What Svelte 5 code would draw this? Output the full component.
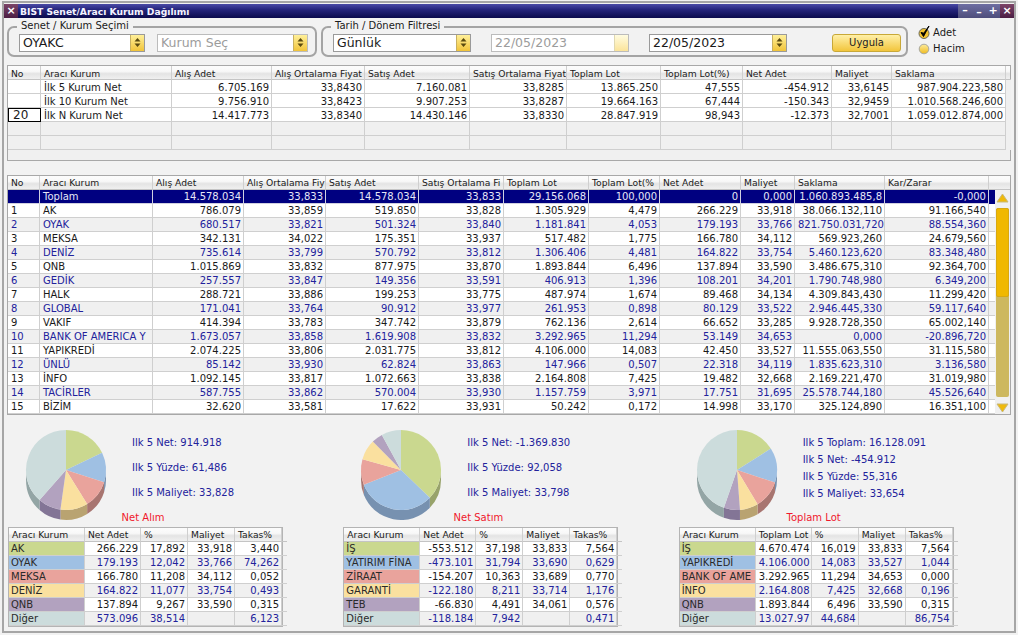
<script>
	// column widths, last one takes what is left
	const topCols = [33, 131, 100, 93, 105, 97, 94, 82, 89, 60, 114]
	const topHead = ['No', 'Aracı Kurum', 'Alış Adet', 'Alış Ortalama Fiyat', 'Satış Adet', 'Satış Ortalama Fiyat', 'Toplam Lot', 'Toplam Lot(%)', 'Net Adet', 'Maliyet', 'Saklama']
	const topRows = [
		['', 'İlk 5 Kurum Net', '6.705.169', '33,8430', '7.160.081', '33,8285', '13.865.250', '47,555', '-454.912', '33,6145', '987.904.223,580'],
		['', 'İlk 10 Kurum Net', '9.756.910', '33,8423', '9.907.253', '33,8287', '19.664.163', '67,444', '-150.343', '32,9459', '1.010.568.246,600'],
		['20', 'İlk N Kurum Net', '14.417.773', '33,8340', '14.430.146', '33,8330', '28.847.919', '98,943', '-12.373', '32,7001', '1.059.012.874,000']
	]

	const mainCols = [32, 113, 91, 82, 93, 85, 85, 71, 81, 54, 90, 104]
	const mainHead = ['No', 'Aracı Kurum', 'Alış Adet', 'Alış Ortalama Fiy', 'Satış Adet', 'Satış Ortalama Fi', 'Toplam Lot', 'Toplam Lot(%', 'Net Adet', 'Maliyet', 'Saklama', 'Kar/Zarar']
	const total = ['', 'Toplam', '14.578.034', '33,833', '14.578.034', '33,833', '29.156.068', '100,000', '0', '0,000', '1.060.893.485,8', '-0,000']
	const mainRows = [
		['1', 'AK', '786.079', '33,859', '519.850', '33,828', '1.305.929', '4,479', '266.229', '33,918', '38.066.132,110', '91.166,540'],
		['2', 'OYAK', '680.517', '33,821', '501.324', '33,840', '1.181.841', '4,053', '179.193', '33,766', '821.750.031,720', '88.554,360'],
		['3', 'MEKSA', '342.131', '34,022', '175.351', '33,937', '517.482', '1,775', '166.780', '34,112', '569.923,260', '24.679,560'],
		['4', 'DENİZ', '735.614', '33,799', '570.792', '33,812', '1.306.406', '4,481', '164.822', '33,754', '5.460.123,620', '83.348,480'],
		['5', 'QNB', '1.015.869', '33,832', '877.975', '33,870', '1.893.844', '6,496', '137.894', '33,590', '3.486.675,310', '92.364,700'],
		['6', 'GEDİK', '257.557', '33,847', '149.356', '33,591', '406.913', '1,396', '108.201', '34,201', '1.790.748,980', '6.349,200'],
		['7', 'HALK', '288.721', '33,886', '199.253', '33,775', '487.974', '1,674', '89.468', '34,134', '4.309.843,430', '11.299,420'],
		['8', 'GLOBAL', '171.041', '33,764', '90.912', '33,977', '261.953', '0,898', '80.129', '33,522', '2.946.445,330', '59.117,640'],
		['9', 'VAKIF', '414.394', '33,783', '347.742', '33,879', '762.136', '2,614', '66.652', '33,285', '9.928.728,350', '65.002,140'],
		['10', 'BANK OF AMERICA Y', '1.673.057', '33,858', '1.619.908', '33,832', '3.292.965', '11,294', '53.149', '34,653', '0,000', '-20.896,720'],
		['11', 'YAPIKREDİ', '2.074.225', '33,806', '2.031.775', '33,812', '4.106.000', '14,083', '42.450', '33,527', '11.555.063,550', '31.115,580'],
		['12', 'ÜNLÜ', '85.142', '33,930', '62.824', '33,863', '147.966', '0,507', '22.318', '34,119', '1.835.623,310', '3.136,580'],
		['13', 'İNFO', '1.092.145', '33,817', '1.072.663', '33,838', '2.164.808', '7,425', '19.482', '32,668', '2.169.221,470', '31.019,980'],
		['14', 'TACİRLER', '587.755', '33,862', '570.004', '33,930', '1.157.759', '3,971', '17.751', '31,695', '25.578.744,180', '45.526,640'],
		['15', 'BİZİM', '32.620', '33,581', '17.622', '33,931', '50.242', '0,172', '14.998', '33,170', '325.124,890', '16.351,100']
	]

	const colors = ['#cad88f', '#9fc0e3', '#e9a39c', '#fae09f', '#b2a2bf', '#ccdcdc']
	const sideColors = ['#98a36b', '#7791b0', '#a87570', '#b9a371', '#837596', '#93a5a5']
	const smallCols = [76, 56, 47, 47, 47]

	const panels = [
		{
			title: 'Net Alım',
			info: ['Ilk 5 Net: 914.918', 'Ilk 5 Yüzde: 61,486', 'Ilk 5 Maliyet: 33,828'],
			valueHead: 'Net Adet',
			rows: [
				['AK', '266.229', '17,892', '33,918', '3,440'],
				['OYAK', '179.193', '12,042', '33,766', '74,262'],
				['MEKSA', '166.780', '11,208', '34,112', '0,052'],
				['DENİZ', '164.822', '11,077', '33,754', '0,493'],
				['QNB', '137.894', '9,267', '33,590', '0,315'],
				['Diğer', '573.096', '38,514', '', '6,123']
			]
		},
		{
			title: 'Net Satım',
			info: ['Ilk 5 Net: -1.369.830', 'Ilk 5 Yüzde: 92,058', 'Ilk 5 Maliyet: 33,798'],
			valueHead: 'Net Adet',
			rows: [
				['İŞ', '-553.512', '37,198', '33,833', '7,564'],
				['YATIRIM FİNA', '-473.101', '31,794', '33,690', '0,629'],
				['ZİRAAT', '-154.207', '10,363', '33,689', '0,770'],
				['GARANTİ', '-122.180', '8,211', '33,714', '1,176'],
				['TEB', '-66.830', '4,491', '34,061', '0,576'],
				['Diğer', '-118.184', '7,942', '', '0,471']
			]
		},
		{
			title: 'Toplam Lot',
			info: ['Ilk 5 Toplam: 16.128.091', 'Ilk 5 Net: -454.912', 'Ilk 5 Yüzde: 55,316', 'Ilk 5 Maliyet: 33,654'],
			valueHead: 'Toplam Lot',
			rows: [
				['İŞ', '4.670.474', '16,019', '33,833', '7,564'],
				['YAPIKREDİ', '4.106.000', '14,083', '33,527', '1,044'],
				['BANK OF AME', '3.292.965', '11,294', '34,653', '0,000'],
				['İNFO', '2.164.808', '7,425', '32,668', '0,196'],
				['QNB', '1.893.844', '6,496', '33,590', '0,315'],
				['Diğer', '13.027.97', '44,684', '', '86,754']
			]
		}
	]

	const cx = 58, cy = 40, r = 40, depth = 10

	function pt (a, dy = 0) {
		return `${(cx + r * Math.sin(a)).toFixed(2)} ${(cy - r * Math.cos(a) + dy).toFixed(2)}`
	}

	// pie slices start at 12 o'clock and go clockwise, side = visible rim of the slice
	function pie (rows) {
		const vals = rows.map(row => parseFloat(row[2].replace(',', '.')))
		const sum = vals.reduce((a, b) => a + b, 0)
		let a = 0
		return vals.map((v, i) => {
			const a2 = a + v / sum * Math.PI * 2
			const large = a2 - a > Math.PI ? 1 : 0
			const top = `M${cx} ${cy}L${pt(a)}A${r} ${r} 0 ${large} 1 ${pt(a2)}Z`
			const s = Math.max(a, Math.PI / 2)
			const e = Math.min(a2, Math.PI * 1.5)
			const side = s < e
				? `M${pt(s)}A${r} ${r} 0 0 1 ${pt(e)}L${pt(e, depth)}A${r} ${r} 0 0 0 ${pt(s, depth)}Z`
				: ''
			a = a2
			return { top, side, fill: colors[i], rim: sideColors[i] }
		})
	}

	function tpl (cols) {
		return cols.map(c => c + 'px').join(' ') + ' 1fr'
	}
</script>

{#snippet arrows()}
	<svg width="7" height="11" viewBox="0 0 7 11"><path d="M3.5 1 6.5 4.5H.5ZM3.5 10 .5 6.5H6.5Z" fill="#5a4a10"/></svg>
{/snippet}

{#snippet head(names, cols)}
	<div class="row hd" style="grid-template-columns:{tpl(cols)}">
		{#each names as name}<div class="cell">{name}</div>{/each}
		<div class="cell fill"></div>
	</div>
{/snippet}

<div class="win">
	<div class="frame">
		<div class="titlebar">
			<span class="tbtn red">×</span>
			<span class="title">BIST Senet/Aracı Kurum Dağılımı</span>
			<span class="tbtn">–</span>
			<span class="tbtn low">–</span>
			<span class="tbtn">+</span>
			<span class="tbtn red">×</span>
		</div>

		<div class="toolbar">
			<fieldset class="group one">
				<legend>Senet / Kurum Seçimi</legend>
				<div class="combo c1"><span class="val">OYAKC</span><span class="btn">{@render arrows()}</span></div>
				<div class="combo c2 off"><span class="val">Kurum Seç</span><span class="btn">{@render arrows()}</span></div>
			</fieldset>
			<fieldset class="group two">
				<legend>Tarih / Dönem Filtresi</legend>
				<div class="combo c3"><span class="val">Günlük</span><span class="btn">{@render arrows()}</span></div>
				<div class="combo c4 off"><span class="val">22/05/2023</span><span class="btn pale"></span></div>
				<div class="combo c4 last"><span class="val">22/05/2023</span><span class="btn">{@render arrows()}</span></div>
				<button class="apply">Uygula</button>
			</fieldset>
			<div class="radios">
				<div class="radio">
					<svg width="15" height="15" viewBox="0 0 15 15">
						<circle cx="6" cy="8.5" r="5" fill="#f2c230" stroke="#6b6b5a"/>
						<path d="M3 7.5 5.5 11.5 11 1 5.8 8.2Z" fill="#000" stroke="#000" stroke-width="1"/>
					</svg>
					Adet
				</div>
				<div class="radio">
					<svg width="15" height="15" viewBox="0 0 15 15">
						<defs>
							<linearGradient id="rb" x1="0" y1="0" x2="0" y2="1">
								<stop offset="0" stop-color="#fdeb9c"/>
								<stop offset="1" stop-color="#f0bc20"/>
							</linearGradient>
						</defs>
						<circle cx="6" cy="8" r="4.8" fill="url(#rb)" stroke="#a8a8a0"/>
					</svg>
					Hacim
				</div>
			</div>
		</div>

		<div class="box topbox">
			{@render head(topHead, topCols)}
			{#each topRows as row}
				<div class="row plain" style="grid-template-columns:{tpl(topCols)}">
					{#each row as val, i}
						<div class="cell" class:r={i > 1} class:edit={val === '20'}>{val}</div>
					{/each}
					<div class="cell fill blank"></div>
				</div>
			{/each}
			{#each [0, 1] as n}
				<div class="row blankrow" style="grid-template-columns:{tpl(topCols)}">
					{#each topCols as c}<div class="cell"></div>{/each}
					<div class="cell fill blank"></div>
				</div>
			{/each}
		</div>

		<div class="box mainbox">
			{@render head(mainHead, mainCols)}
			<div class="mainbody">
				<div class="rows">
					<div class="row sel" style="grid-template-columns:{tpl(mainCols)}">
						{#each total as val, i}<div class="cell" class:r={i > 1}>{val}</div>{/each}
						<div class="cell fill"></div>
					</div>
					{#each mainRows as row, n}
						<div class="row" class:alt={n % 2 === 1} style="grid-template-columns:{tpl(mainCols)}">
							{#each row as val, i}<div class="cell" class:r={i > 1}>{val}</div>{/each}
							<div class="cell fill"></div>
						</div>
					{/each}
				</div>
				<div class="scroll">
					<div class="sbtn up"><svg width="13" height="10" viewBox="0 0 13 10"><path d="M6.5 1 12 9H1Z" fill="#efb90a" stroke="#c9b978"/></svg></div>
					<div class="track"><div class="thumb"></div></div>
					<div class="sbtn down"><svg width="13" height="10" viewBox="0 0 13 10"><path d="M1 1H12L6.5 9Z" fill="#efb90a" stroke="#c9b978"/></svg></div>
				</div>
			</div>
		</div>

		<div class="panels">
			{#each panels as p}
				<div class="panel">
					<div class="chart">
						<svg class="pie" width="116" height="97" viewBox="0 0 116 97">
							{#each pie(p.rows) as s}
								{#if s.side}<path d={s.side} fill={s.rim}/>{/if}
							{/each}
							{#each pie(p.rows) as s}
								<path d={s.top} fill={s.fill}/>
							{/each}
						</svg>
						<div class="info" class:tight={p.info.length > 3}>
							{#each p.info as line}<div>{line}</div>{/each}
						</div>
						<div class="ptitle">{p.title}</div>
					</div>
					<div class="box small">
						{@render head(['Aracı Kurum', p.valueHead, '%', 'Maliyet', 'Takas%'], smallCols)}
						{#each p.rows as row, n}
							<div class="row" class:alt={n % 2 === 1} style="grid-template-columns:{tpl(smallCols)}">
								{#each row as val, i}
									{#if i === 0}
										<div class="cell key" style="background:{colors[n]}">{val}</div>
									{:else}
										<div class="cell r">{val}</div>
									{/if}
								{/each}
								<div class="cell fill"></div>
							</div>
						{/each}
					</div>
				</div>
			{/each}
		</div>
	</div>
</div>

<style>
	:global(body) {
		margin: 0;
		background: #f2f2f2;
	}

	.win {
		box-sizing: border-box;
		width: 1018px;
		height: 635px;
		padding: 1px 2px 2px 2px;
		font-family: "DejaVu Sans", Verdana, sans-serif;
		font-size: 10px;
		color: #1a1a1a;
		overflow: hidden;
	}

	.frame {
		box-sizing: border-box;
		height: 100%;
		border: 2px solid #a6a6a6;
		padding-top: 1px;
		background: #f2f2f2;
	}

	/* title bar */
	.titlebar {
		display: flex;
		align-items: center;
		height: 14px;
		background: linear-gradient(#4a4aa6, #25257c 40%, #0a0a4c);
	}

	.title {
		flex: 1;
		margin-left: 2px;
		color: #f4f4ff;
		font-weight: bold;
		font-size: 9.2px;
	}

	.tbtn {
		width: 14px;
		height: 14px;
		line-height: 13px;
		text-align: center;
		color: #fff;
		font-weight: bold;
		font-size: 11px;
		background: linear-gradient(#6e6ea2, #4e4e7c);
	}

	.tbtn.low {
		line-height: 17px;
	}

	.tbtn.red {
		background: linear-gradient(#7c4468, #4c1e44);
	}

	/* filter bar */
	.toolbar {
		display: flex;
		align-items: flex-start;
		gap: 4px;
		padding: 1px 0 0 3px;
	}

	.group {
		display: flex;
		align-items: center;
		box-sizing: border-box;
		height: 38px;
		margin: 0;
		padding: 0 0 4px 10px;
		border: 2px solid #a4a4a4;
		border-radius: 7px;
		min-width: 0;
	}

	.group legend {
		padding: 0 4px 2px 4px;
		margin-left: -2px;
		font-size: 10px;
		line-height: 13px;
	}

	.group.one {
		width: 310px;
	}

	.group.two {
		width: 587px;
	}

	.combo {
		display: flex;
		box-sizing: border-box;
		height: 18px;
		background: #fff;
		border: 1px solid #9a9a9a;
		font-size: 12.5px;
		line-height: 15px;
	}

	.combo.off {
		color: #9c9c9c;
		border-color: #bcbcbc;
	}

	.val {
		flex: 1;
		padding-left: 3px;
		overflow: hidden;
		white-space: nowrap;
	}

	.btn {
		display: flex;
		align-items: center;
		justify-content: center;
		width: 13px;
		background: linear-gradient(#fff09a, #f1c43a);
		border-left: 1px solid #c8b060;
	}

	.btn.pale {
		background: linear-gradient(#fffce0, #fbe49a);
		border-left-color: #e0d8b0;
	}

	.c1 {
		width: 126px;
	}

	.c2 {
		width: 151px;
		margin-left: 12px;
	}

	.c3 {
		width: 138px;
	}

	.c4 {
		width: 138px;
		margin-left: 20px;
	}

	.apply {
		width: 69px;
		height: 18px;
		margin-left: 45px;
		padding: 0;
		border: 1px solid #c8a838;
		border-radius: 3px;
		background: linear-gradient(#fff0a8, #f2c53c);
		font: inherit;
		color: #222;
	}

	.radios {
		display: flex;
		flex-direction: column;
		gap: 1px;
		margin: 6px 0 0 6px;
	}

	.radio {
		display: flex;
		align-items: center;
		gap: 0;
		height: 15px;
	}

	/* grids */
	.box {
		border: 1px solid #a8a8a8;
		background: #f0f0f0;
	}

	.topbox {
		box-sizing: border-box;
		height: 96px;
		margin: 8px 3px 0 3px;
	}

	.topbox .cell {
		line-height: 15px;
	}

	.mainbox {
		box-sizing: border-box;
		height: 240px;
		margin: 14px 3px 0 3px;
		border-bottom-width: 2px;
	}

	.row {
		display: grid;
		height: 14px;
		background: #fff;
	}

	.row.alt {
		background: #f0f0f0;
		color: #22229c;
	}

	.row.sel {
		background: #000080;
		color: #e6e6f6;
	}

	.row.plain .blank,
	.blankrow .blank {
		background: #f0f0f0;
		border-bottom: 0;
	}

	.blankrow {
		background: #f0f0f0;
	}

	.cell {
		box-sizing: border-box;
		height: 14px;
		padding: 0 2px 0 3px;
		line-height: 13px;
		white-space: nowrap;
		overflow: hidden;
		border-right: 1px solid #cfcfcf;
		border-bottom: 1px solid #cfcfcf;
	}

	.cell.r {
		text-align: right;
	}

	.cell.fill {
		border-right: 0;
	}

	.topbox .cell.edit {
		padding-left: 4px;
		border: 1px solid #000;
		font-size: 12px;
		line-height: 12px;
		text-align: left;
	}

	.row.sel .cell {
		border-color: #d0d0e0;
	}

	.row.sel .cell.fill {
		border-bottom-color: #000080;
	}

	.hd {
		background: linear-gradient(#fcfcfc, #f8f8f8 38%, #e4e4e4 55%, #f2f2f2);
		font-size: 9.2px;
	}

	.hd .cell {
		border-bottom-color: #c4c4c4;
	}

	.mainbody {
		display: flex;
	}

	.rows {
		flex: 1;
		min-width: 0;
	}

	.scroll {
		display: flex;
		flex-direction: column;
		width: 15px;
		height: 224px;
		background: #f0f0f0;
	}

	.sbtn {
		display: flex;
		justify-content: center;
	}

	.sbtn.up {
		height: 18px;
		padding-top: 3px;
		box-sizing: border-box;
	}

	.sbtn.down {
		height: 17px;
		padding-top: 6px;
		box-sizing: border-box;
	}

	.track {
		flex: 1;
		margin: 0 1px;
		background: #cdb85e;
		border-radius: 2px;
	}

	.thumb {
		box-sizing: border-box;
		height: 89px;
		background: #f0b800;
		border: 1px solid #d8a810;
		border-radius: 2px;
	}

	/* bottom charts */
	.panels {
		display: flex;
		padding: 15px 0 0 4px;
	}

	.panel {
		width: 336px;
	}

	.chart {
		display: grid;
		grid-template-columns: 124px 1fr;
		grid-template-rows: 81px 16px;
	}

	.pie {
		grid-row: 1 / 3;
		grid-column: 1;
	}

	.info {
		grid-row: 1;
		grid-column: 2;
		display: flex;
		flex-direction: column;
		gap: 12px;
		padding-top: 6px;
		color: #22229c;
		line-height: 13px;
	}

	.info.tight {
		gap: 4px;
	}

	.ptitle {
		grid-row: 2;
		grid-column: 1 / 3;
		width: 270px;
		text-align: center;
		color: #f0182c;
		line-height: 13px;
	}

	.small {
		box-sizing: border-box;
		width: 275px;
		height: 100px;
		border-width: 1px 2px 2px 1px;
		border-color: #b4b4b4;
	}

	.cell.key {
		color: #2a2a2a;
		padding-left: 2px;
	}
</style>
